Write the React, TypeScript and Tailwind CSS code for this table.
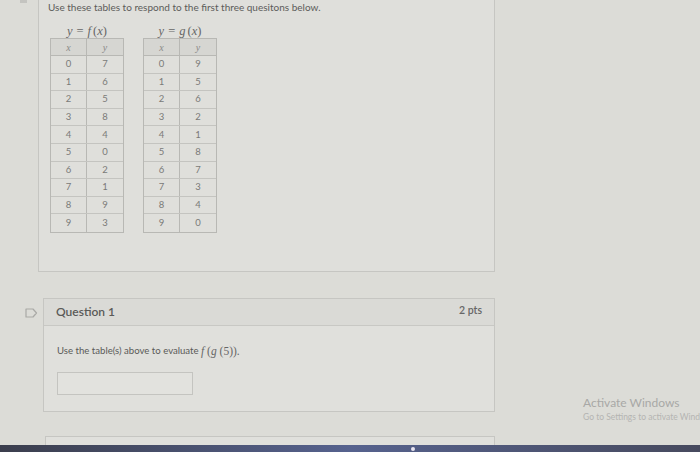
import React from "react";

const fRows: [number, number][] = [
  [0, 7], [1, 6], [2, 5], [3, 8], [4, 4], [5, 0], [6, 2], [7, 1], [8, 9], [9, 3],
];
const gRows: [number, number][] = [
  [0, 9], [1, 5], [2, 6], [3, 2], [4, 1], [5, 8], [6, 7], [7, 3], [8, 4], [9, 0],
];

function MathTitle({ fn }: { fn: string }) {
  return (
    <div className="h-[12px] flex items-center justify-center text-[12.5px] text-[#666] leading-none" style={{ fontFamily: '"Liberation Serif", serif' }}>
      <span className="italic">y</span>
      <span className="mx-[4px]">=</span>
      <span className="italic">{fn}</span>
      <span className="ml-[2px]">(</span>
      <span className="italic">x</span>
      <span>)</span>
    </div>
  );
}

function ValueTable({ fn, rows }: { fn: string; rows: [number, number][] }) {
  return (
    <div className="flex flex-col w-[74px]">
      <MathTitle fn={fn} />
      <div className="mt-[1px] border border-[#b8b8b4] flex flex-col">
        <div className="grid grid-cols-2 h-[17px] bg-[#d6d6d2] border-b border-[#b8b8b4] text-[#8a8a88] text-[10px]" style={{ fontFamily: '"Liberation Serif", serif' }}>
          <div className="flex items-center justify-center italic border-r border-[#b8b8b4]">x</div>
          <div className="flex items-center justify-center italic">y</div>
        </div>
        {rows.map(([x, y], i) => (
          <div key={x} className={"grid grid-cols-2 h-[17.6px] " + (i < rows.length - 1 ? "border-b border-[#c4c4c0]" : "")}>
            <div className="flex items-center justify-center border-r border-[#b8b8b4] text-[9.5px] text-[#7a7a78]">{x}</div>
            <div className="flex items-center justify-center text-[9.5px] text-[#7a7a78]">{y}</div>
          </div>
        ))}
      </div>
    </div>
  );
}

export default function App() {
  return (
    <div className="w-[700px] h-[452px] overflow-hidden relative bg-[#dcdcd7] flex flex-col" style={{ fontFamily: 'Lato, "Noto Sans", sans-serif' }}>
      {/* top-left leftover flag */}
      <div className="absolute left-[20px] top-0 w-[7px] h-[3px] bg-[#c4c4c0]" />

      {/* top panel */}
      <div className="ml-[38px] w-[457px] h-[272px] shrink-0 border-l border-r border-b border-[#c6c6c2] bg-[#dfdfdb] pl-[9px] pt-[1px]">
        <div className="text-[10px] text-[#5c5c5a] leading-[12px]">Use these tables to respond to the first three quesitons below.</div>
        <div className="flex gap-[19px] mt-[12px] ml-[2px]">
          <ValueTable fn="f" rows={fRows} />
          <ValueTable fn="g" rows={gRows} />
        </div>
      </div>

      {/* question row */}
      <div className="flex mt-[26px] shrink-0">
        <div className="w-[43px] flex justify-end pr-[5px] pt-[10px]">
          <svg width="13" height="10" viewBox="0 0 13 10" fill="none">
            <path d="M1 1 H8 L11.5 5 L8 9 H1 Z" stroke="#a9a9a6" strokeWidth="1.2" strokeLinejoin="round" />
          </svg>
        </div>
        <div className="w-[452px] h-[114px] border border-[#c6c6c2] bg-[#e0e0dc] flex flex-col">
          <div className="h-[27px] flex items-center justify-between px-[12px] bg-[#dadad6] border-b border-[#c8c8c4]">
            <span className="text-[12px] font-semibold text-[#5a5a58]">Question 1</span>
            <span className="text-[10.5px] font-semibold text-[#666] -mt-[3px]">2 pts</span>
          </div>
          <div className="pl-[13px] pt-[19px] flex flex-col">
            <div className="text-[9.6px] text-[#5a5a58] leading-[12px] flex items-center whitespace-nowrap">
              <span>Use the table(s) above to evaluate&nbsp;</span>
              <span className="text-[11.5px] text-[#666]" style={{ fontFamily: '"Liberation Serif", serif' }}>
                <i>f</i> (<i>g</i> (5)).
              </span>
            </div>
            <div className="mt-[15px] w-[136px] h-[23px] border border-[#c4c4c0] bg-[#e2e2de]" />
          </div>
        </div>
      </div>

      {/* next panel */}
      <div className="ml-[45px] mt-[24px] w-[450px] h-[20px] shrink-0 border-l border-r border-t border-[#c6c6c2] bg-[#e0e0dc]" />

      {/* activate windows watermark */}
      <div className="absolute left-[583px] top-[396px] flex flex-col">
        <span className="text-[12px] text-[#a8a8a6] leading-[14px] whitespace-nowrap">Activate Windows</span>
        <span className="text-[8.5px] text-[#b4b4b2] leading-[10px] whitespace-nowrap mt-[2px]">Go to Settings to activate Windows.</span>
      </div>

      {/* bottom bezel / taskbar */}
      <div className="absolute left-0 right-0 bottom-0 h-[7px] bg-gradient-to-r from-[#3b3e4d] via-[#56628e] to-[#474a5e]">
        <div className="absolute left-[411px] top-[2px] w-[4px] h-[4px] rounded-full bg-[#e8e4f0]" />
      </div>
    </div>
  );
}
